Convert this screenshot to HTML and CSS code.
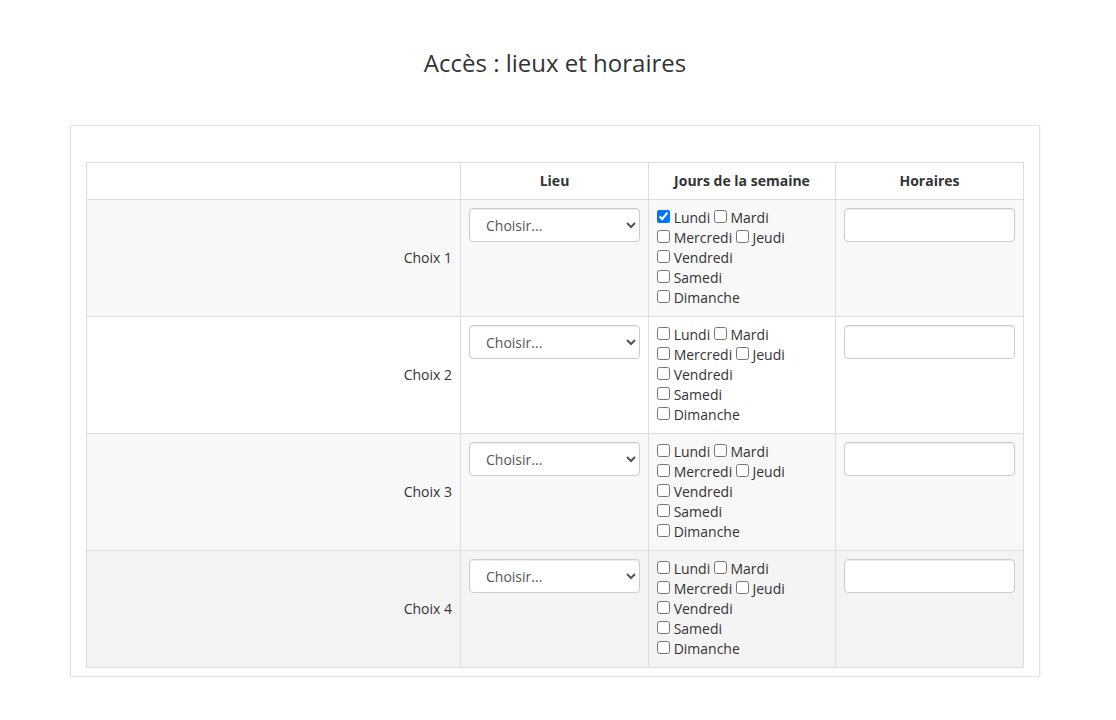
FILE: index.html
```html
<!DOCTYPE html>
<html lang="fr">
<head>
    <meta charset="UTF-8">
    <meta name="viewport" content="width=device-width, initial-scale=1.0">
    <title>Accès : lieux et horaires</title>
    <link rel="stylesheet" href="styles.css">
</head>
<body>
    <div class="page">
        <h3 class="titre">Accès : lieux et horaires</h3>
        <!-- tableau des choix -->
        <div class="panel">
            <table class="choix">
                <thead>
                    <tr>
                        <th class="col-label"></th>
                        <th class="col-lieu">Lieu</th>
                        <th class="col-jours">Jours de la semaine</th>
                        <th class="col-horaires">Horaires</th>
                    </tr>
                </thead>
                <tbody>
                    <tr class="stripe">
                        <td class="label">Choix 1</td>
                        <td>
                            <select class="form-control"><option>Choisir...</option></select>
                        </td>
                        <td class="jours">
                            <label><input type="checkbox" checked> Lundi</label>
                            <label><input type="checkbox"> Mardi</label><br>
                            <label><input type="checkbox"> Mercredi</label>
                            <label><input type="checkbox"> Jeudi</label><br>
                            <label><input type="checkbox"> Vendredi</label><br>
                            <label><input type="checkbox"> Samedi</label><br>
                            <label><input type="checkbox"> Dimanche</label>
                        </td>
                        <td><input type="text" class="form-control"></td>
                    </tr>
                    <tr>
                        <td class="label">Choix 2</td>
                        <td>
                            <select class="form-control"><option>Choisir...</option></select>
                        </td>
                        <td class="jours">
                            <label><input type="checkbox"> Lundi</label>
                            <label><input type="checkbox"> Mardi</label><br>
                            <label><input type="checkbox"> Mercredi</label>
                            <label><input type="checkbox"> Jeudi</label><br>
                            <label><input type="checkbox"> Vendredi</label><br>
                            <label><input type="checkbox"> Samedi</label><br>
                            <label><input type="checkbox"> Dimanche</label>
                        </td>
                        <td><input type="text" class="form-control"></td>
                    </tr>
                    <tr class="stripe">
                        <td class="label">Choix 3</td>
                        <td>
                            <select class="form-control"><option>Choisir...</option></select>
                        </td>
                        <td class="jours">
                            <label><input type="checkbox"> Lundi</label>
                            <label><input type="checkbox"> Mardi</label><br>
                            <label><input type="checkbox"> Mercredi</label>
                            <label><input type="checkbox"> Jeudi</label><br>
                            <label><input type="checkbox"> Vendredi</label><br>
                            <label><input type="checkbox"> Samedi</label><br>
                            <label><input type="checkbox"> Dimanche</label>
                        </td>
                        <td><input type="text" class="form-control"></td>
                    </tr>
                    <tr class="hover">
                        <td class="label">Choix 4</td>
                        <td>
                            <select class="form-control"><option>Choisir...</option></select>
                        </td>
                        <td class="jours">
                            <label><input type="checkbox"> Lundi</label>
                            <label><input type="checkbox"> Mardi</label><br>
                            <label><input type="checkbox"> Mercredi</label>
                            <label><input type="checkbox"> Jeudi</label><br>
                            <label><input type="checkbox"> Vendredi</label><br>
                            <label><input type="checkbox"> Samedi</label><br>
                            <label><input type="checkbox"> Dimanche</label>
                        </td>
                        <td><input type="text" class="form-control"></td>
                    </tr>
                </tbody>
            </table>
        </div>
    </div>
</body>
</html>
```

FILE: styles.css
```css
/* page */
body {
    margin: 0;
    font-family: "Open Sans", "Liberation Sans", sans-serif;
    font-size: 14px;
    line-height: 20px;
    color: #333;
    background-color: #fff;
}
.page {
    width: 970px;
    margin-left: 70px;
}
.titre {
    margin: 0;
    padding-top: 49px;
    height: 125px;
    box-sizing: border-box;
    text-align: center;
    font-size: 24px;
    font-weight: normal;
    line-height: 28px;
    color: #333;
}
/* cadre du tableau */
.panel {
    border: 1px solid #e3e3e3;
    box-shadow: 0 1px 2px rgba(0, 0, 0, 0.12);
    padding: 36px 15px 8px 15px;
    background-color: #fff;
}
.choix {
    width: 100%;
    border-collapse: collapse;
    table-layout: fixed;
}
.choix th,
.choix td {
    border: 1px solid #ddd;
    padding: 8px;
    vertical-align: top;
}
.choix th {
    text-align: center;
    font-weight: bold;
    vertical-align: middle;
}
.col-label { width: 357px; }
.col-lieu { width: 171px; }
.col-jours { width: 170px; }
.col-horaires { width: 171px; }
.choix td.label {
    text-align: right;
    vertical-align: middle;
}
.choix tr.stripe td {
    background-color: #f8f8f8;
}
.choix tr.hover td {
    background-color: #f4f4f4;
}
/* champs */
.form-control {
    display: block;
    width: 100%;
    height: 34px;
    box-sizing: border-box;
    padding: 6px 12px;
    font-family: inherit;
    font-size: 14px;
    color: #555;
    background-color: #fff;
    border: 1px solid #ccc;
    border-radius: 4px;
    box-shadow: inset 0 1px 1px rgba(0, 0, 0, 0.075);
}
.jours label {
    white-space: nowrap;
}
.jours input[type="checkbox"] {
    margin: 0;
    width: 13px;
    height: 13px;
}
```
